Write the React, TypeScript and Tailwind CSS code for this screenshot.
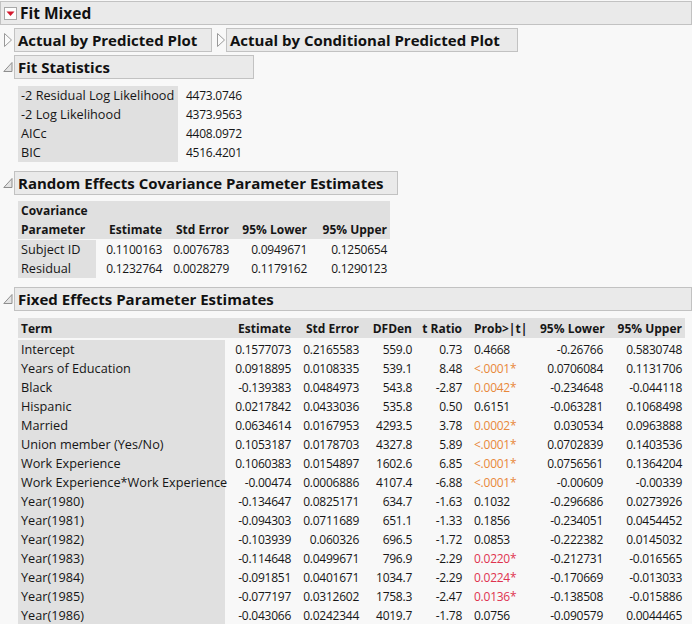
import React from "react";

type Tone = "plain" | "orange" | "red";

const fixedRows: [string, string, string, string, string, string, Tone, string, string][] = [
	["Intercept", "0.1577073", "0.2165583", "559.0", "0.73", "0.4668", "plain", "-0.26766", "0.5830748"],
	["Years of Education", "0.0918895", "0.0108335", "539.1", "8.48", "<.0001*", "orange", "0.0706084", "0.1131706"],
	["Black", "-0.139383", "0.0484973", "543.8", "-2.87", "0.0042*", "orange", "-0.234648", "-0.044118"],
	["Hispanic", "0.0217842", "0.0433036", "535.8", "0.50", "0.6151", "plain", "-0.063281", "0.1068498"],
	["Married", "0.0634614", "0.0167953", "4293.5", "3.78", "0.0002*", "orange", "0.030534", "0.0963888"],
	["Union member (Yes/No)", "0.1053187", "0.0178703", "4327.8", "5.89", "<.0001*", "orange", "0.0702839", "0.1403536"],
	["Work Experience", "0.1060383", "0.0154897", "1602.6", "6.85", "<.0001*", "orange", "0.0756561", "0.1364204"],
	["Work Experience*Work Experience", "-0.00474", "0.0006886", "4107.4", "-6.88", "<.0001*", "orange", "-0.00609", "-0.00339"],
	["Year(1980)", "-0.134647", "0.0825171", "634.7", "-1.63", "0.1032", "plain", "-0.296686", "0.0273926"],
	["Year(1981)", "-0.094303", "0.0711689", "651.1", "-1.33", "0.1856", "plain", "-0.234051", "0.0454452"],
	["Year(1982)", "-0.103939", "0.060326", "696.5", "-1.72", "0.0853", "plain", "-0.222382", "0.0145032"],
	["Year(1983)", "-0.114648", "0.0499671", "796.9", "-2.29", "0.0220*", "red", "-0.212731", "-0.016565"],
	["Year(1984)", "-0.091851", "0.0401671", "1034.7", "-2.29", "0.0224*", "red", "-0.170669", "-0.013033"],
	["Year(1985)", "-0.077197", "0.0312602", "1758.3", "-2.47", "0.0136*", "red", "-0.138508", "-0.015886"],
	["Year(1986)", "-0.043066", "0.0242344", "4019.7", "-1.78", "0.0756", "plain", "-0.090579", "0.0044465"],
];

const fitStats = [
	["-2 Residual Log Likelihood", "4473.0746"],
	["-2 Log Likelihood", "4373.9563"],
	["AICc", "4408.0972"],
	["BIC", "4516.4201"],
];

const covRows = [
	["Subject ID", "0.1100163", "0.0076783", "0.0949671", "0.1250654"],
	["Residual", "0.1232764", "0.0028279", "0.1179162", "0.1290123"],
];

// numbers are set a touch tighter than labels
const num = "whitespace-nowrap p-0 text-[12px] tracking-[-0.25px]";
const label = "whitespace-nowrap bg-[#e0e0e0] p-0 pl-[3px] text-left text-[12.7px]";
const head = "whitespace-nowrap p-0 text-[12px] font-bold";

function ClosedIcon() {
	return (
		<svg width="10" height="16" viewBox="0 0 10 16" className="shrink-0">
			<path d="M1.5 1.5 L8.5 8 L1.5 14.5 Z" fill="#fbfbfb" stroke="#9a9a9a" strokeWidth="1" />
		</svg>
	);
}

function OpenIcon() {
	return (
		<svg width="10" height="12" viewBox="0 0 10 12" className="shrink-0">
			<path d="M9 1.5 L9 10.5 L0.8 10.5 Z" fill="#e4e4e4" stroke="#8e8e8e" strokeWidth="1" />
		</svg>
	);
}

function RedIcon() {
	return (
		<svg width="13" height="13" viewBox="0 0 13 13" className="shrink-0">
			<rect x="0.5" y="0.5" width="12" height="12" fill="#fdfdfd" stroke="#a8a8a8" />
			<path d="M2.5 4.5 L10.5 4.5 L6.5 9 Z" fill="#d4182d" />
		</svg>
	);
}

function Title({ children, className = "" }: { children: React.ReactNode; className?: string }) {
	return (
		<div
			className={`flex h-[24px] items-center whitespace-nowrap border border-[#c2c2c2] bg-[#eaeaea] px-[3px] text-[15px] font-bold leading-none text-[#111] ${className}`}
		>
			{children}
		</div>
	);
}

function Section({
	title,
	width,
	children,
}: {
	title: string;
	width: string;
	children?: React.ReactNode;
}) {
	return (
		<div>
			<div className="flex items-center">
				<div className="flex w-[14px] justify-center pl-[1px]">
					<OpenIcon />
				</div>
				<Title className={width}>{title}</Title>
			</div>
			{children}
		</div>
	);
}

export default function App() {
	const toneClass: Record<Tone, string> = {
		plain: "",
		orange: "text-[#e8883a]",
		red: "text-[#df3350]",
	};

	return (
		<div
			className="h-[624px] w-[692px] overflow-hidden bg-[#f8f8f8] pt-[1px] leading-[19px] text-[#161616]"
			style={{ fontFamily: '"Open Sans", "Noto Sans", sans-serif' }}
		>
			<div className="flex h-[24px] items-center gap-[3px] border border-[#c2c2c2] bg-[#eaeaea] pl-[3px] text-[15.5px] font-bold text-[#111]">
				<RedIcon />
				<span>Fit Mixed</span>
			</div>

			<div className="mt-[3px] flex items-center gap-[3px]">
				<div className="flex items-center">
					<div className="flex w-[14px] justify-center pl-[1px]">
						<ClosedIcon />
					</div>
					<Title className="w-[198px]">Actual by Predicted Plot</Title>
				</div>
				<div className="flex items-center">
					<div className="flex w-[11px] justify-center">
						<ClosedIcon />
					</div>
					<Title className="w-[292px]">Actual by Conditional Predicted Plot</Title>
				</div>
			</div>

			<div className="mt-[3px]">
				<Section title="Fit Statistics" width="w-[240px]">
					<table className="ml-[18px] mt-[7px] w-[240px] table-fixed border-collapse">
						<colgroup>
							<col className="w-[160px]" />
							<col className="w-[80px]" />
						</colgroup>
						<tbody>
							{fitStats.map(([k, v]) => (
								<tr key={k} className="h-[19px]">
									<td className={label}>{k}</td>
									<td className={`${num} pl-[8px]`}>{v}</td>
								</tr>
							))}
						</tbody>
					</table>
				</Section>
			</div>

			<div className="mt-[9px]">
				<Section title="Random Effects Covariance Parameter Estimates" width="w-[384px]">
					<table className="ml-[18px] mt-[6px] w-[372px] table-fixed border-collapse">
						<colgroup>
							<col className="w-[78px]" />
							<col className="w-[69px]" />
							<col className="w-[67px]" />
							<col className="w-[78px]" />
							<col className="w-[80px]" />
						</colgroup>
						<thead>
							<tr className="bg-[#e0e0e0]">
								<th className={`${head} pl-[3px] text-left align-bottom`}>
									Covariance
									<br />
									Parameter
								</th>
								<th className={`${head} pr-[3px] text-right align-bottom`}>Estimate</th>
								<th className={`${head} pr-[3px] text-right align-bottom`}>Std Error</th>
								<th className={`${head} pr-[3px] text-right align-bottom`}>95% Lower</th>
								<th className={`${head} pr-[3px] text-right align-bottom`}>95% Upper</th>
							</tr>
						</thead>
						<tbody>
							<tr>
								<td colSpan={5} className="h-[1px] p-0 leading-[1px]" />
							</tr>
							{covRows.map((r) => (
								<tr key={r[0]} className="h-[19px]">
									<td className={label}>{r[0]}</td>
									{r.slice(1).map((c, i) => (
										<td key={i} className={`${num} pr-[3px] text-right`}>
											{c}
										</td>
									))}
								</tr>
							))}
						</tbody>
					</table>
				</Section>
			</div>

			<div className="mt-[9px]">
				<Section title="Fixed Effects Parameter Estimates" width="flex-1">
					<table className="ml-[18px] mt-[7px] w-[667px] table-fixed border-collapse">
						<colgroup>
							<col className="w-[207px]" />
							<col className="w-[69px]" />
							<col className="w-[68px]" />
							<col className="w-[53px]" />
							<col className="w-[50px]" />
							<col className="w-[75px]" />
							<col className="w-[66px]" />
							<col className="w-[79px]" />
						</colgroup>
						<thead>
							<tr className="h-[20px] bg-[#e0e0e0]">
								<th className={`${head} pl-[3px] text-left`}>Term</th>
								<th className={`${head} pr-[3px] text-right`}>Estimate</th>
								<th className={`${head} pr-[3px] text-right`}>Std Error</th>
								<th className={`${head} pr-[3px] text-right`}>DFDen</th>
								<th className={`${head} pr-[3px] text-right`}>t Ratio</th>
								<th className={`${head} pl-[9px] text-left`}>Prob&gt;|t|</th>
								<th className={`${head} pr-[3px] text-right`}>95% Lower</th>
								<th className={`${head} pr-[3px] text-right`}>95% Upper</th>
							</tr>
						</thead>
						<tbody>
							<tr>
								<td colSpan={8} className="h-[2px] p-0 leading-[2px]" />
							</tr>
							{fixedRows.map((r) => (
								<tr key={r[0]} className="h-[19px]">
									<td className={label}>{r[0]}</td>
									<td className={`${num} pr-[3px] text-right`}>{r[1]}</td>
									<td className={`${num} pr-[3px] text-right`}>{r[2]}</td>
									<td className={`${num} pr-[3px] text-right`}>{r[3]}</td>
									<td className={`${num} pr-[3px] text-right`}>{r[4]}</td>
									<td className={`${num} pl-[9px] text-left ${toneClass[r[6]]}`}>{r[5]}</td>
									<td className={`${num} pr-[3px] text-right`}>{r[7]}</td>
									<td className={`${num} pr-[3px] text-right`}>{r[8]}</td>
								</tr>
							))}
						</tbody>
					</table>
				</Section>
			</div>
		</div>
	);
}
